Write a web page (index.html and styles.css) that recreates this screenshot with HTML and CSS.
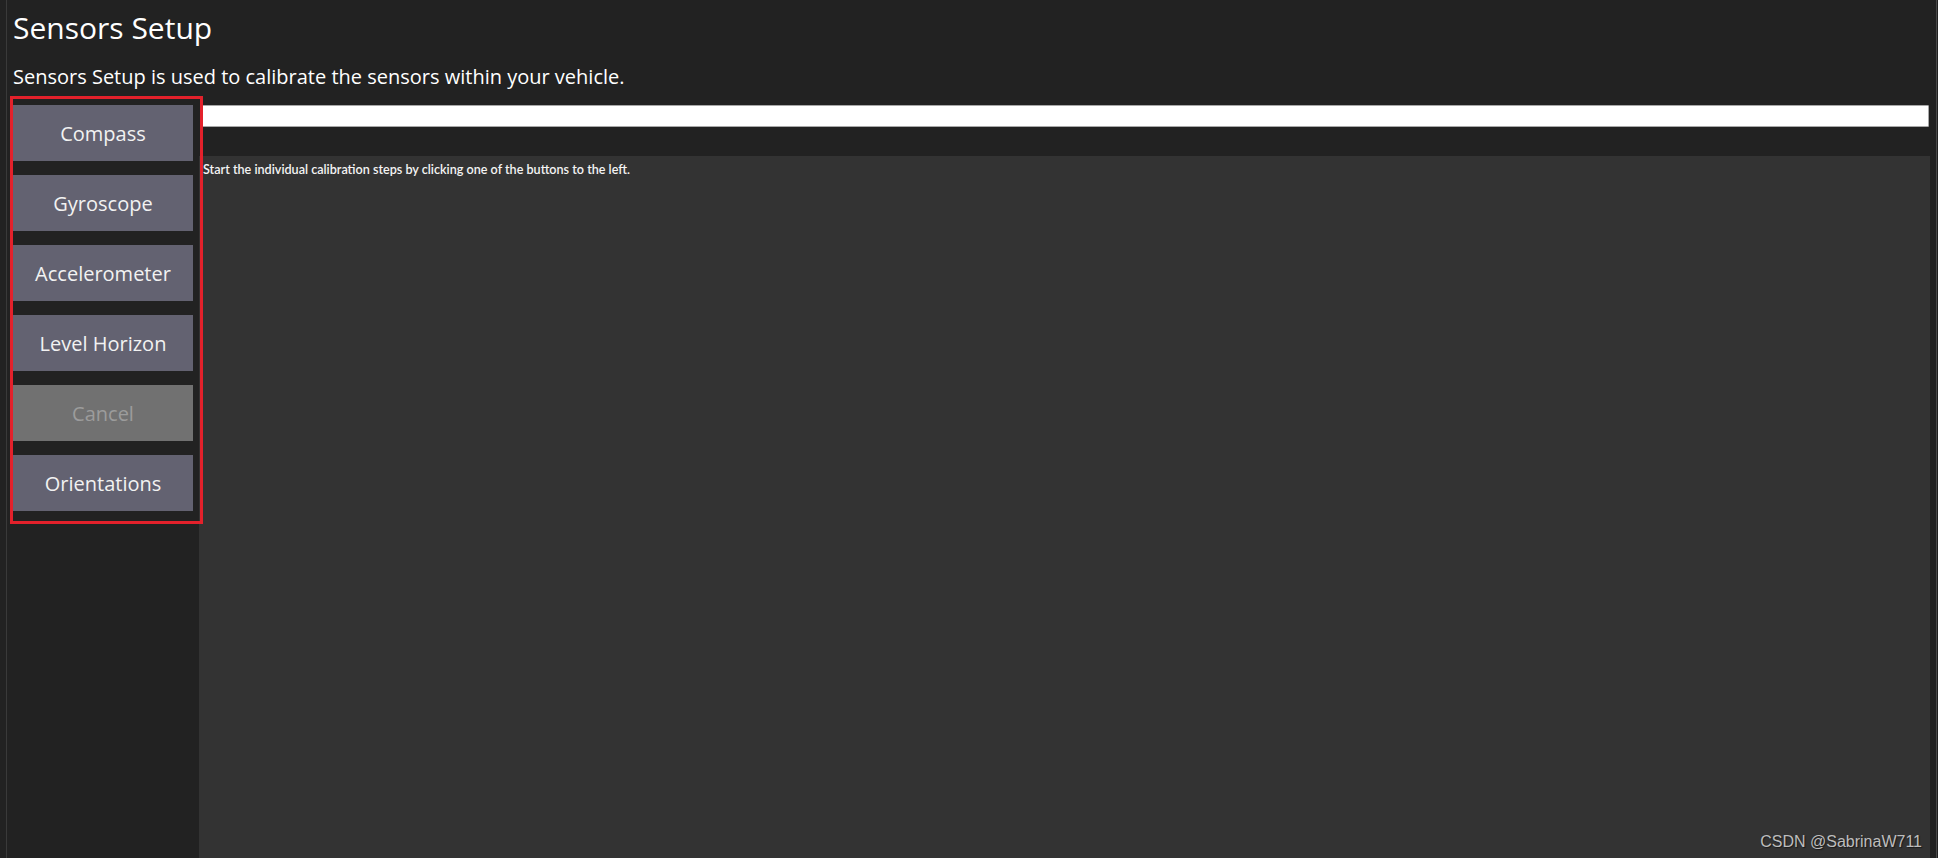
FILE: index.html
```html
<!DOCTYPE html>
<html>
<head>
<meta charset="utf-8">
<link rel="stylesheet" href="styles.css">
</head>
<body>
<div class="frame">
  <h1 class="title">Sensors Setup</h1>
  <p class="subtitle">Sensors Setup is used to calibrate the sensors within your vehicle.</p>
  <div class="main">
    <div class="sidebar">
      <button class="btn">Compass</button>
      <button class="btn">Gyroscope</button>
      <button class="btn">Accelerometer</button>
      <button class="btn">Level Horizon</button>
      <button class="btn btn-disabled">Cancel</button>
      <button class="btn">Orientations</button>
    </div>
    <div class="content">
      <div class="progress"></div>
      <div class="panel">
        <p class="panel-text">Start the individual calibration steps by clicking one of the buttons to the left.</p>
        <div class="watermark">CSDN @SabrinaW711</div>
      </div>
    </div>
    <div class="highlight"></div>
  </div>
</div>
</body>
</html>
```
FILE: styles.css
```css
html, body {
  margin: 0;
  padding: 0;
  height: 100%;
  background: #222222;
  overflow: hidden;
}
.frame {
  margin: 0 1px 0 6px;
  border-left: 1px solid #3a3a3a;
  border-right: 1px solid #4a4a4a;
  height: 100%;
  display: flex;
  flex-direction: column;
  font-family: "Open Sans", "Noto Sans", sans-serif;
  color: #ffffff;
}
.title {
  margin: 8px 0 0 6px;
  font-size: 30px;
  line-height: 40px;
  font-weight: 400;
}
.subtitle {
  margin: 16px 0 0 6px;
  font-size: 20px;
  line-height: 26px;
  font-weight: 400;
}
.main {
  position: relative;
  margin-top: 6px;
  flex: 1;
  display: flex;
  min-height: 0;
}
.sidebar {
  width: 186px;
  padding: 9px 0 0 6px;
  display: flex;
  flex-direction: column;
  gap: 14px;
}
.btn {
  width: 180px;
  height: 56px;
  border: none;
  padding: 0;
  background: #636271;
  color: #f2f2f2;
  font-family: "Open Sans", "Noto Sans", sans-serif;
  font-size: 20px;
}
.btn-disabled {
  background: #717171;
  color: #9c9c9c;
}
.content {
  width: 1731px;
  display: flex;
  flex-direction: column;
}
.progress {
  margin: 9px 1px 0 2px;
  height: 20px;
  background: #ffffff;
  border: 1px solid #a8a8a8;
  border-radius: 1px;
}
.panel {
  position: relative;
  margin-top: 29px;
  flex: 1;
  background: #333333;
}
.panel-text {
  margin: 0;
  padding: 6px 0 0 4px;
  font-family: "Lato", sans-serif;
  font-weight: 600;
  font-size: 12.6px;
  line-height: 16px;
  color: #f4f4f4;
}
.watermark {
  position: absolute;
  right: 8px;
  bottom: 7px;
  font-family: "Liberation Sans", sans-serif;
  font-size: 16px;
  color: #bdbdbd;
  text-shadow: 1px 1px 1px #1a1a1a;
}
.highlight {
  position: absolute;
  left: 3px;
  top: 0;
  width: 187px;
  height: 422px;
  border: 3px solid #e3212b;
  pointer-events: none;
}
```
